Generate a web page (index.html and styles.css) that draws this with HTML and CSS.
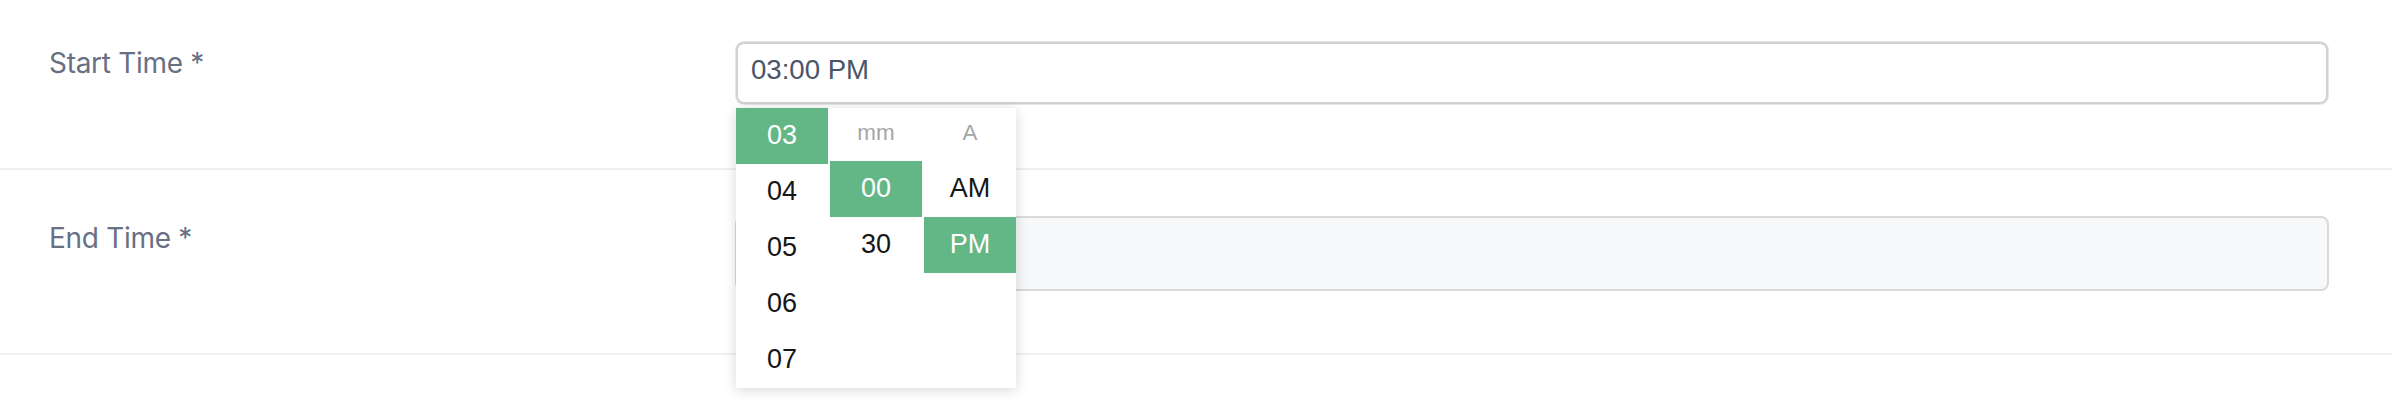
FILE: index.html
```html
<!DOCTYPE html>
<html lang="en">
<head>
<meta charset="utf-8">
<title>Time picker</title>
<link rel="stylesheet" href="styles.css">
</head>
<body>
<div class="form">
  <div class="row row-first">
    <label class="label">Start Time *</label>
    <div class="field">
      <div class="picker">
        <div class="picker-input">03:00 PM</div>
        <div class="dropdown">
          <ul class="col">
            <li class="opt active">03</li>
            <li class="opt">04</li>
            <li class="opt">05</li>
            <li class="opt">06</li>
            <li class="opt">07</li>
          </ul>
          <ul class="col col-sep">
            <li class="hint">mm</li>
            <li class="opt active">00</li>
            <li class="opt">30</li>
          </ul>
          <ul class="col col-sep">
            <li class="hint">A</li>
            <li class="opt">AM</li>
            <li class="opt active">PM</li>
          </ul>
        </div>
      </div>
    </div>
  </div>
  <div class="row row-second">
    <label class="label">End Time *</label>
    <div class="field">
      <div class="plain-input"></div>
    </div>
  </div>
</div>
</body>
</html>
```

FILE: styles.css
```css
html, body {
  margin: 0;
  padding: 0;
  background: #ffffff;
}

body {
  min-height: 400px;
}

.form {
  width: 2392px;
  min-height: 400px;
}

.row {
  display: grid;
  grid-template-columns: 735px 1fr;
  padding-right: 63px;
  border-bottom: 2px solid #efefef;
  box-sizing: border-box;
}

.row-first {
  height: 170px;
  padding-top: 41px;
  position: relative;
  z-index: 2;
}

.row-second {
  height: 185px;
  padding-top: 46px;
  position: relative;
  z-index: 1;
}

.label {
  display: block;
  padding-left: 49px;
  padding-top: 1px;
  font-family: Inter, "Noto Sans", sans-serif;
  font-size: 28px;
  line-height: 42px;
  color: #687083;
  letter-spacing: -0.3px;
}

.field {
  position: relative;
}

.picker {
  position: relative;
  margin: 1px;
}

.picker-input {
  box-sizing: border-box;
  height: 62px;
  border: 2px solid #d2d2d2;
  box-shadow: 0 0 0 1px #e6e6e6;
  border-radius: 8px;
  background: #fff;
  padding: 10px 13px 0;
  font-family: "Liberation Sans", Arial, sans-serif;
  font-size: 27.6px;
  line-height: 32px;
  color: #4a5568;
}

.dropdown {
  position: absolute;
  top: 66px;
  left: 0;
  z-index: 5;
  width: 280px;
  height: 280px;
  background: #fff;
  box-shadow: 0 2px 12px rgba(0, 0, 0, 0.16);
  display: flex;
  flex-flow: row nowrap;
  align-items: flex-start;
  font-family: "Liberation Sans", Arial, sans-serif;
}

.col {
  flex: 1 1 0;
  margin: 0;
  padding: 0;
  list-style: none;
}

.col-sep {
  border-left: 2px solid #fff;
}

.opt {
  height: 56px;
  box-sizing: border-box;
  padding-top: 7.6px;
  font-size: 27px;
  line-height: 39.2px;
  text-align: center;
  color: #161616;
}

.opt.active {
  background: #63b787;
  color: #fff;
}

.hint {
  height: 53px;
  box-sizing: border-box;
  padding-top: 4.6px;
  font-size: 22.4px;
  line-height: 39.2px;
  text-align: center;
  color: #a5a5a5;
}

.plain-input {
  box-sizing: border-box;
  height: 75px;
  border: 2px solid #dadada;
  border-radius: 8px;
  background: #f7f8fa;
}
```
